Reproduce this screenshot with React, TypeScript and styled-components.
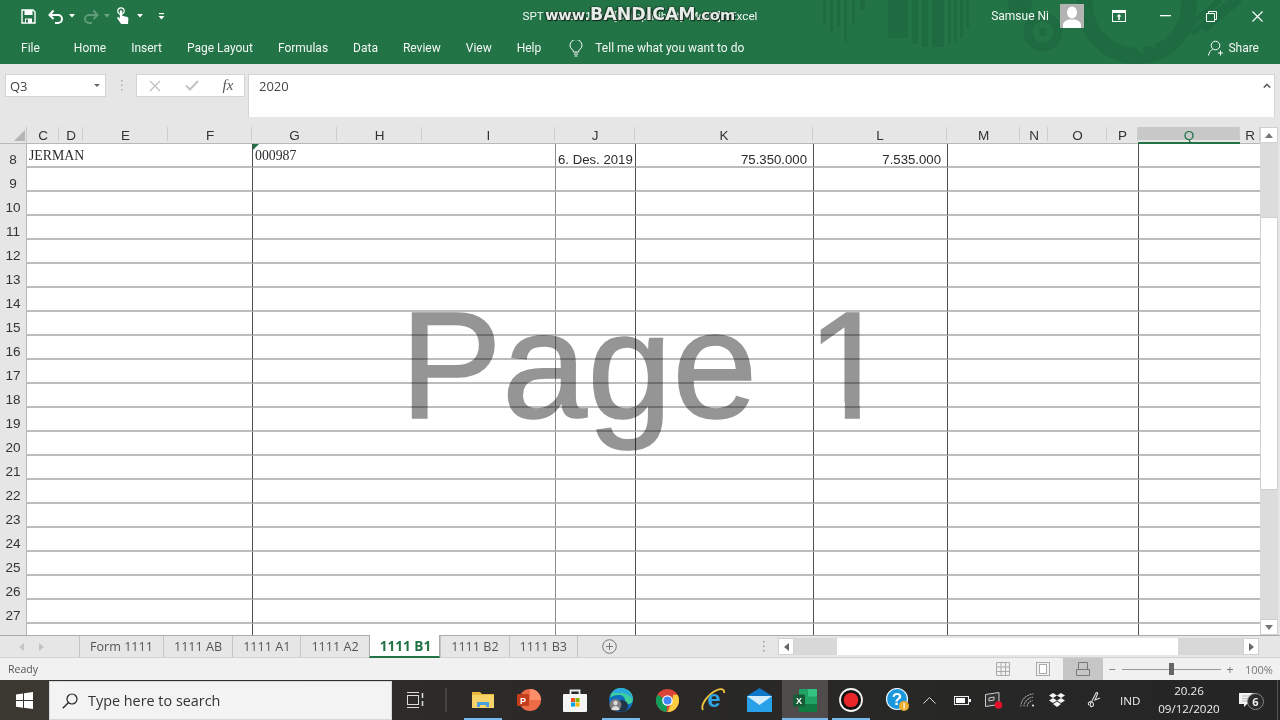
import { Fragment } from "react";
import styled, { createGlobalStyle } from "styled-components";

const GlobalStyle = createGlobalStyle`
  html, body {
    margin: 0;
    padding: 0;
    overflow: hidden;
    background: #e6e6e6;
    font-family: "Open Sans", "Noto Sans", sans-serif;
  }
  * { box-sizing: border-box; }
`;

const Window = styled.div`
  width: 1280px;
  height: 720px;
  display: flex;
  flex-direction: column;
  overflow: hidden;
`;

/* ---------- title bar ---------- */

const TitleBar = styled.header`
  position: relative;
  height: 64px;
  flex: none;
  background: #227447;
  color: #f4f8f5;
  font-family: Roboto, "Open Sans", sans-serif;
  font-size: 12px;
`;

const TitleArt = styled.svg`
  position: absolute;
  left: 800px;
  top: 0;
`;

const TitleRow = styled.div`
  position: relative;
  height: 32px;
  display: grid;
  grid-template-columns: 1fr auto 1fr;
  align-items: center;
`;

const QuickAccess = styled.div`
  display: flex;
  align-items: center;
  height: 32px;
  padding-left: 20px;
`;

const QuickButton = styled.span<{ $w: number; $ml?: number; $dim?: boolean }>`
  width: ${(p) => p.$w}px;
  margin-left: ${(p) => p.$ml ?? 0}px;
  height: 20px;
  display: flex;
  align-items: center;
  justify-content: center;
  opacity: ${(p) => (p.$dim ? 0.35 : 1)};
`;

const DocTitle = styled.div`
  font-size: 11.7px;
  white-space: nowrap;
`;

const Watermark = styled.div`
  position: absolute;
  left: 530px;
  top: 3px;
  width: 220px;
  text-align: center;
  white-space: nowrap;
  font-family: "DejaVu Sans", sans-serif;
  font-weight: 700;
  font-size: 14.6px;
  line-height: 22px;
  color: #e6ece8;
  text-shadow: 0 0 2px #14291c, 1px 1px 1px #14291c, -1px 0 1px #14291c;
  b {
    font-size: 17.4px;
  }
`;

const WindowSide = styled.div`
  display: flex;
  align-items: center;
  justify-content: flex-end;
  height: 32px;
`;

const UserName = styled.span`
  margin-right: 11px;
`;

const Avatar = styled.span`
  width: 24px;
  height: 24px;
  margin-right: 12px;
  background: #b3b3b3;
  display: flex;
`;

const WindowButton = styled.span`
  width: 46px;
  height: 32px;
  display: flex;
  align-items: center;
  justify-content: center;
`;

const RibbonRow = styled.nav`
  position: relative;
  height: 32px;
  display: flex;
  align-items: center;
  padding-left: 21px;
`;

const RibbonTab = styled.span<{ $first?: boolean }>`
  margin-right: ${(p) => (p.$first ? 34 : 25)}px;
  white-space: nowrap;
`;

const TellMe = styled.span`
  display: flex;
  align-items: center;
  gap: 12px;
  margin-left: 3px;
`;

const Share = styled.span`
  margin-left: auto;
  margin-right: 21px;
  display: flex;
  align-items: center;
  gap: 5px;
`;

/* ---------- formula bar ---------- */

const FormulaBar = styled.section`
  height: 63px;
  flex: none;
  display: flex;
  align-items: flex-start;
  padding: 10px 5px 0 5px;
  background: #e6e6e6;
`;

const NameBox = styled.div`
  width: 101px;
  height: 23px;
  background: #fff;
  border: 1px solid #d4d4d4;
  display: flex;
  align-items: center;
  justify-content: space-between;
  padding: 0 5px 0 4px;
  font-size: 13px;
  color: #444;
`;

const Caret = styled.span`
  width: 0;
  height: 0;
  border-left: 3px solid transparent;
  border-right: 3px solid transparent;
  border-top: 3px solid #666;
`;

const Grip = styled.div`
  width: 30px;
  height: 23px;
  display: flex;
  align-items: center;
  justify-content: center;
`;

const FunctionBox = styled.div`
  width: 109px;
  height: 23px;
  background: #fff;
  border: 1px solid #d4d4d4;
  display: grid;
  grid-template-columns: 36px 37px 36px;
  align-items: center;
  justify-items: center;
  color: #666;
`;

const FxLabel = styled.span`
  font-family: "Liberation Serif", serif;
  font-style: italic;
  font-size: 15px;
  color: #555;
`;

const FormulaInput = styled.div`
  margin-left: 3px;
  width: 1027px;
  height: 43px;
  background: #fff;
  border: 1px solid #d4d4d4;
  border-bottom: none;
  padding: 2px 10px;
  display: flex;
  justify-content: space-between;
  font-size: 13px;
  line-height: 18px;
  color: #444;
`;

const CollapseButton = styled.span`
  margin: -2px -7px 0 0;
`;

/* ---------- sheet ---------- */

const Sheet = styled.main`
  position: relative;
  height: 508px;
  flex: none;
  display: flex;
  background: #e6e6e6;
`;

const Grid = styled.div`
  width: 1260px;
  height: 508px;
  overflow: hidden;
  display: grid;
  grid-auto-rows: 24px;
  grid-template-rows: 17px;
  background: #fff;
  font-family: "Liberation Sans", sans-serif;
`;

const Corner = styled.div`
  background: #e6e6e6;
  border-bottom: 1px solid #b8b8b8;
  border-right: 1px solid #c6c6c6;
  padding: 3px 0 0 14px;
`;

const CornerMark = styled.div`
  width: 0;
  height: 0;
  border-left: 11px solid transparent;
  border-bottom: 11px solid #b5b5b5;
`;

const ColumnHead = styled.div<{ $selected?: boolean }>`
  background: ${(p) => (p.$selected ? "#c8c8c8" : "#e6e6e6")};
  color: ${(p) => (p.$selected ? "#217346" : "#333")};
  border-bottom: ${(p) => (p.$selected ? "2px solid #217346" : "1px solid #b8b8b8")};
  box-shadow: inset -1px -3px 0 -1px #e6e6e6, inset -1px 0 0 #cdcdcd;
  font-size: 13.5px;
  line-height: 17px;
  text-align: center;
`;

const RowHead = styled.div`
  background: #e6e6e6;
  border-right: 1px solid #b8b8b8;
  color: #333;
  font-size: 13.5px;
  padding-top: 8px;
  text-align: center;
`;

const Cell = styled.div<{ $edge?: string; $right?: boolean; $serif?: boolean }>`
  position: relative;
  border-bottom: 2px solid #bcbcbc;
  border-left: ${(p) => (p.$edge ? `1px solid ${p.$edge}` : "none")};
  color: #2b2b2b;
  white-space: nowrap;
  font-family: ${(p) => (p.$serif ? '"Liberation Serif", serif' : '"Liberation Sans", sans-serif')};
  font-size: ${(p) => (p.$serif ? 13.8 : 13.2)}px;
  text-align: ${(p) => (p.$right ? "right" : "left")};
  padding: ${(p) => (p.$serif ? "4px 2px 0 2px" : "8px 6px 0 2px")};
`;

const ErrorMark = styled.span`
  position: absolute;
  left: 0;
  top: 0;
  width: 0;
  height: 0;
  border-top: 6px solid #217346;
  border-right: 6px solid transparent;
`;

const PageLabel = styled.div`
  position: absolute;
  left: 400px;
  top: 161px;
  font-family: "Liberation Sans", sans-serif;
  font-size: 153px;
  line-height: 153px;
  color: #959595;
  -webkit-text-stroke: 1.5px #959595;
  mix-blend-mode: multiply;
  white-space: pre;
`;

/* Liberation's 1 has a foot that the reference's font lacks, so it is cut away */
const PageDigit = styled.span`
  display: inline-block;
  margin-left: 7px;
  clip-path: polygon(0 0, 90px 0, 90px 114px, 53px 114px, 53px 145px, 38px 145px, 38px 114px, 0 114px);
`;

const ScrollBar = styled.div`
  width: 20px;
  display: flex;
  flex-direction: column;
  align-items: center;
  padding-right: 2px;
`;

const ScrollArrow = styled.span`
  width: 18px;
  height: 16px;
  flex: none;
  background: #fff;
  border: 1px solid #d0d0d0;
  display: flex;
  align-items: center;
  justify-content: center;
`;

const ScrollTrack = styled.div<{ $grow: number }>`
  width: 18px;
  flex: ${(p) => p.$grow} 0 0;
  background: #dcdcdc;
`;

const ScrollThumb = styled.div`
  width: 18px;
  height: 273px;
  flex: none;
  background: #fff;
  border: 1px solid #d0d0d0;
`;

/* ---------- sheet tabs ---------- */

const TabBar = styled.div`
  height: 23px;
  flex: none;
  display: flex;
  align-items: stretch;
  background: #e6e6e6;
  border-top: 1px solid #ababab;
  border-bottom: 1px solid #d2d2d2;
  padding-left: 16px;
  color: #555;
`;

const TabNav = styled.div`
  width: 63px;
  display: flex;
  align-items: center;
  gap: 15px;
  padding-left: 3px;
`;

const Tab = styled.div<{ $active?: boolean }>`
  position: relative;
  margin-top: ${(p) => (p.$active ? -1 : 0)}px;
  padding: ${(p) => (p.$active ? "0 8px 0 10px" : "0 10px")};
  height: ${(p) => (p.$active ? 23 : 21)}px;
  font-size: ${(p) => (p.$active ? 13.6 : 12.6)}px;
  line-height: 22px;
  white-space: nowrap;
  background: ${(p) => (p.$active ? "#fff" : "transparent")};
  color: ${(p) => (p.$active ? "#217346" : "#555")};
  font-weight: ${(p) => (p.$active ? 700 : 400)};
  border-left: 1px solid ${(p) => (p.$active ? "#ababab" : "#c4c4c4")};
  border-right: ${(p) => (p.$active ? "1px solid #ababab" : "none")};
  border-bottom: ${(p) => (p.$active ? "2px solid #217346" : "none")};
`;

const TabEnd = styled.span`
  width: 1px;
  height: 21px;
  background: #c4c4c4;
`;

const AddSheet = styled.span`
  margin-left: 24px;
  width: 16px;
  display: flex;
  align-items: center;
`;

const TabSplit = styled.span`
  margin-left: 144px;
  width: 12px;
  display: flex;
  align-items: center;
`;

const HScroll = styled.div`
  margin-left: 4px;
  margin-top: 2px;
  width: 481px;
  height: 17px;
  display: flex;
`;

const HArrow = styled.span`
  width: 16px;
  flex: none;
  background: #fff;
  border: 1px solid #d0d0d0;
  display: flex;
  align-items: center;
  justify-content: center;
`;

const HTrack = styled.div<{ $w: number }>`
  width: ${(p) => p.$w}px;
  flex: none;
  background: ${(p) => (p.$w > 200 ? "#fff" : "#d8d8d8")};
`;

/* ---------- status bar ---------- */

const StatusBar = styled.footer`
  height: 22px;
  flex: none;
  display: flex;
  align-items: center;
  background: #f1f1f1;
  padding-left: 8px;
  font-size: 10.5px;
  color: #555;
`;

const StatusViews = styled.div`
  margin-left: auto;
  display: flex;
  align-items: stretch;
  height: 22px;
`;

const ViewButton = styled.span<{ $active?: boolean }>`
  width: 40px;
  display: flex;
  align-items: center;
  justify-content: center;
  background: ${(p) => (p.$active ? "#c6c6c6" : "transparent")};
`;

const ZoomArea = styled.div`
  width: 177px;
  display: flex;
  align-items: center;
  padding-left: 2px;
  color: #777;
  font-size: 11px;
`;

const ZoomSign = styled.span`
  width: 14px;
  text-align: center;
  font-size: 13px;
`;

const ZoomSlider = styled.div`
  position: relative;
  width: 99px;
  height: 1px;
  margin: 0 2px 0 3px;
  background: #999;
`;

const ZoomThumb = styled.span`
  position: absolute;
  left: 47px;
  top: -6px;
  width: 5px;
  height: 12px;
  background: #666;
`;

const ZoomValue = styled.span`
  margin-left: 8px;
`;

/* ---------- taskbar ---------- */

const Taskbar = styled.div`
  height: 40px;
  flex: none;
  display: flex;
  align-items: stretch;
  background: linear-gradient(90deg, #34322d 0%, #2b2a28 40%, #252525 100%);
  color: #eee;
`;

const StartButton = styled.div`
  width: 49px;
  display: flex;
  align-items: center;
  justify-content: center;
  background: #3b3831;
`;

const SearchBox = styled.div`
  width: 343px;
  margin-top: 1px;
  background: #f3f3f3;
  color: #333;
  display: flex;
  align-items: center;
  gap: 10px;
  padding-left: 12px;
  font-size: 14.4px;
  border: 1px solid #d8d8d8;
`;

const TaskSlot = styled.div<{ $open?: boolean; $active?: boolean }>`
  position: relative;
  width: 46px;
  display: flex;
  align-items: center;
  justify-content: center;
  background: ${(p) => (p.$active ? "#4f4c4b" : "transparent")};
  &::after {
    content: "";
    display: ${(p) => (p.$open ? "block" : "none")};
    position: absolute;
    left: ${(p) => (p.$active ? 0 : 4)}px;
    right: ${(p) => (p.$active ? 0 : 4)}px;
    bottom: 0;
    height: 2px;
    background: #76b9ed;
  }
`;

const TaskGap = styled.div`
  width: 22px;
  display: flex;
  align-items: center;
  padding-left: 7px;
`;

const TaskSeparator = styled.span`
  width: 2px;
  height: 24px;
  background: #45433f;
`;

const TrayIcon = styled.span<{ $ml: number }>`
  width: 18px;
  margin-left: ${(p) => p.$ml}px;
  display: flex;
  align-items: center;
  justify-content: center;
`;

const TrayText = styled.span`
  margin-left: 17px;
  width: 24px;
  align-self: center;
  font-size: 11.6px;
  white-space: nowrap;
`;

const Clock = styled.div`
  margin-left: 13px;
  width: 64px;
  align-self: center;
  text-align: center;
  font-size: 11.6px;
  line-height: 18px;
  white-space: nowrap;
`;

const Notice = styled.span`
  position: relative;
  margin-left: 18px;
  width: 20px;
  display: flex;
  align-items: center;
`;

const NoticeCount = styled.span`
  position: absolute;
  left: 8px;
  top: 13px;
  width: 17px;
  height: 17px;
  border-radius: 50%;
  border: 1px solid #888;
  background: #2a2a2a;
  text-align: center;
  font-size: 11px;
  font-weight: 700;
  line-height: 15px;
`;

const DesktopEdge = styled.span`
  margin-left: 18px;
  width: 1px;
  background: #555;
`;

/* ---------- icons ---------- */

const SaveIcon = () => (
  <svg width="15" height="15" viewBox="0 0 15 15">
    <path d="M1 1h11l2 2v11H1z" fill="none" stroke="#fff" strokeWidth="1.4" />
    <rect x="3.500" y="1" width="8" height="5" fill="#fff" />
    <rect x="4" y="9.500" width="7" height="4.500" fill="#fff" />
    <rect x="5" y="10.500" width="2" height="3" fill="#227447" />
  </svg>
);

const UndoIcon = () => (
  <svg width="16" height="15" viewBox="0 0 16 15">
    <path d="M2 6h8a4 4 0 0 1 0 8H7M5.500 1.500 1.500 6l4 4" fill="none" stroke="#fff" strokeWidth="2" />
  </svg>
);

const RedoIcon = () => (
  <svg width="16" height="15" viewBox="0 0 16 15">
    <path d="M14 6H6a4 4 0 0 0 0 8h3M10.500 1.500l4 4.500-4 4" fill="none" stroke="#cfe3d7" strokeWidth="2" />
  </svg>
);

const TouchIcon = () => (
  <svg width="14" height="18" viewBox="0 0 14 18">
    <circle cx="5" cy="4" r="3.200" fill="none" stroke="#fff" strokeWidth="1.200" />
    <path d="M3.800 4.500a1.200 1.200 0 0 1 2.400 0v4.200l5 1.300c1 .4 1.300 1 1.200 2L12 17H5.200L1.300 11.600c-.5-1 .6-2 1.500-1.200l1 1z" fill="#fff" />
  </svg>
);

const TinyDown = ({ color = "#fff" }: { color?: string }) => (
  <svg width="6" height="4" viewBox="0 0 6 4">
    <path d="M0 0h6L3 3.500z" fill={color} />
  </svg>
);

const CustomizeIcon = () => (
  <svg width="7" height="7" viewBox="0 0 7 7">
    <rect x="1" y="0" width="5" height="1.200" fill="#fff" />
    <path d="M.5 3h6L3.500 6.500z" fill="#fff" />
  </svg>
);

const UserGlyph = () => (
  <svg width="24" height="24" viewBox="0 0 24 24">
    <ellipse cx="12" cy="8.500" rx="5" ry="6" fill="#fff" />
    <path d="M3 24v-3c0-3.500 4-5 6.500-5.500h5C17 16 21 17.500 21 21v3z" fill="#fff" />
  </svg>
);

const RibbonDisplayIcon = () => (
  <svg width="14" height="12" viewBox="0 0 14 12">
    <rect x=".5" y=".5" width="13" height="11" fill="none" stroke="#fff" />
    <rect x="1" y="1" width="12" height="2" fill="#fff" />
    <path d="M7 4 4.500 6.500h1.700V10h1.600V6.500h1.700z" fill="#fff" />
  </svg>
);

const MinimizeIcon = () => (
  <svg width="11" height="2" viewBox="0 0 11 2">
    <rect width="11" height="1.300" fill="#fff" />
  </svg>
);

const RestoreIcon = () => (
  <svg width="11" height="11" viewBox="0 0 11 11">
    <path d="M2.500 2.500V.5h8v8h-2M.5 2.500h8v8h-8z" fill="none" stroke="#fff" />
  </svg>
);

const CloseIcon = () => (
  <svg width="11" height="11" viewBox="0 0 11 11">
    <path d="M.5.500l10 10M10.500.5l-10 10" stroke="#fff" strokeWidth="1.100" />
  </svg>
);

const BulbIcon = () => (
  <svg width="14" height="17" viewBox="0 0 14 17">
    <path d="M4.500 12c0-2.500-3.500-3.500-3.500-6.500a6 6 0 0 1 12 0c0 3-3.500 4-3.500 6.500z" fill="none" stroke="#fff" />
    <path d="M5 14h4M5.500 16h3" stroke="#fff" />
  </svg>
);

const ShareIcon = () => (
  <svg width="15" height="16" viewBox="0 0 15 16">
    <circle cx="7.500" cy="5.500" r="4.300" fill="none" stroke="#fff" />
    <path d="M.5 15.500c.6-3.500 2.500-5.500 4-6M10 13h5M12.500 10.500v5" fill="none" stroke="#fff" />
  </svg>
);

const GripDots = ({ color = "#aaa" }: { color?: string }) => (
  <svg width="3" height="11" viewBox="0 0 3 11">
    <rect x="1" y="0" width="1.500" height="1.500" fill={color} />
    <rect x="1" y="4.500" width="1.500" height="1.500" fill={color} />
    <rect x="1" y="9" width="1.500" height="1.500" fill={color} />
  </svg>
);

const CrossMark = () => (
  <svg width="12" height="12" viewBox="0 0 12 12">
    <path d="M1 1l10 10M11 1 1 11" stroke="#c2c2c2" strokeWidth="1.400" />
  </svg>
);

const CheckMark = () => (
  <svg width="14" height="11" viewBox="0 0 14 11">
    <path d="M1 5.500l4 4 8-8.500" fill="none" stroke="#c2c2c2" strokeWidth="2" />
  </svg>
);

const Chevron = () => (
  <svg width="8" height="6" viewBox="0 0 10 7">
    <path d="M1 5.500l4-4 4 4" fill="none" stroke="#666" strokeWidth="2" />
  </svg>
);

const Triangle = ({ dir, color = "#666" }: { dir: "up" | "down" | "left" | "right"; color?: string }) => {
  const paths = { up: "M0 5h8L4 0z", down: "M0 0h8L4 5z", left: "M5 0v8L0 4z", right: "M0 0v8l5-4z" };
  const box = dir === "up" || dir === "down" ? "0 0 8 5" : "0 0 5 8";
  const wide = dir === "up" || dir === "down";
  return (
    <svg width={wide ? 8 : 5} height={wide ? 5 : 8} viewBox={box}>
      <path d={paths[dir]} fill={color} />
    </svg>
  );
};

const AddIcon = () => (
  <svg width="15" height="15" viewBox="0 0 15 15">
    <circle cx="7.500" cy="7.500" r="6.800" fill="none" stroke="#777" />
    <path d="M7.500 4v7M4 7.500h7" stroke="#777" />
  </svg>
);

const NormalViewIcon = () => (
  <svg width="14" height="14" viewBox="0 0 14 14">
    <path d="M.5.500h13v13H.5zM.5 5h13M.5 9.500h13M5 .5v13M9.500.5v13" fill="none" stroke="#aaa" />
  </svg>
);

const LayoutViewIcon = () => (
  <svg width="14" height="14" viewBox="0 0 14 14">
    <rect x=".5" y=".5" width="13" height="13" fill="none" stroke="#aaa" />
    <rect x="3.500" y="2.500" width="7" height="9" fill="#fff" stroke="#aaa" />
  </svg>
);

const BreakViewIcon = () => (
  <svg width="14" height="14" viewBox="0 0 14 14">
    <path d="M.5 7.500h13v6H.5zM2.500 7.500V.5h9v7" fill="none" stroke="#777" />
  </svg>
);

const WindowsLogo = () => (
  <svg width="17" height="17" viewBox="0 0 17 17">
    <path d="M0 2.400 7 1.400v6.700H0zM8 1.300 17 0v8.100H8zM0 9h7v6.700l-7-1zM8 9h9v8l-9-1.200z" fill="#fff" />
  </svg>
);

const SearchGlyph = () => (
  <svg width="16" height="16" viewBox="0 0 16 16">
    <circle cx="10" cy="6" r="5" fill="none" stroke="#222" strokeWidth="1.200" />
    <path d="M6.300 9.700.8 15.200" stroke="#222" strokeWidth="1.300" />
  </svg>
);

const TaskViewIcon = () => (
  <svg width="17" height="16" viewBox="0 0 17 16">
    <path d="M0 .5h12M0 15.500h12" stroke="#ddd" />
    <rect x=".5" y="3.500" width="11" height="9" fill="none" stroke="#ddd" />
    <path d="M15.500 1v5M15.500 9v5" stroke="#ddd" strokeWidth="1.500" />
  </svg>
);

const ExplorerIcon = () => (
  <svg width="22" height="20" viewBox="0 0 22 20">
    <path d="M0 2h8l2 2h12v14H0z" fill="#e8b93e" />
    <rect y="5" width="22" height="13" fill="#f6d469" />
    <path d="M5 17v-5h12v5h-3v-2H8v2z" fill="#4a9fdd" />
  </svg>
);

const PowerPointIcon = () => (
  <svg width="24" height="22" viewBox="0 0 24 22">
    <circle cx="13" cy="11" r="11" fill="#ed6c47" />
    <path d="M13 0a11 11 0 0 1 11 11H13z" fill="#ff8f6b" />
    <rect y="5" width="12" height="12" rx="1" fill="#c43e1c" />
    <text x="6" y="14.500" textAnchor="middle" fontFamily="Liberation Sans" fontWeight="700" fontSize="9" fill="#fff">P</text>
  </svg>
);

const StoreIcon = () => (
  <svg width="24" height="24" viewBox="0 0 24 24">
    <path d="M7.500 6V2.500h9V6" fill="none" stroke="#eee" strokeWidth="1.800" />
    <rect y="6" width="24" height="18" rx="1" fill="#f5f5f5" />
    <rect x="8" y="10" width="4" height="4" fill="#f25022" />
    <rect x="12.500" y="10" width="4" height="4" fill="#7fba00" />
    <rect x="8" y="14.500" width="4" height="4" fill="#00a4ef" />
    <rect x="12.500" y="14.500" width="4" height="4" fill="#ffb900" />
  </svg>
);

const EdgeIcon = () => (
  <svg width="26" height="26" viewBox="0 0 26 26">
    <circle cx="13" cy="13" r="12" fill="#0f6cbd" />
    <path d="M2 11C3 4 8 1 13 1c7 0 12 5 12 11 0 3-2 5-5 5h-7c2 0 4-2 4-4 0-3-3-5-6-5-4 0-7 1-9 3z" fill="#3ecf9e" />
    <path d="M10 6c5-1 11 1 15 7-1-7-6-12-12-12C9 1 6 3 4 6z" fill="#2aa9e0" />
    <circle cx="14" cy="19" r="6" fill="#22344a" />
    <circle cx="7.500" cy="18" r="6" fill="#7d7d7d" />
    <circle cx="7.500" cy="16" r="2.200" fill="#ddd" />
    <path d="M3.500 23c.5-3 2-4 4-4s3.500 1 4 4z" fill="#ddd" />
  </svg>
);

const ChromeIcon = () => (
  <svg width="23" height="23" viewBox="0 0 24 24">
    <circle cx="12" cy="12" r="12" fill="#db4437" />
    <path d="M12 24A12 12 0 0 1 1.600 6L12 12l-1 12z" fill="#0f9d58" />
    <path d="M22.400 6A12 12 0 0 1 12 24l5-12 1-6z" fill="#ffcd40" />
    <circle cx="12" cy="12" r="5.500" fill="#fff" />
    <circle cx="12" cy="12" r="4.200" fill="#4285f4" />
  </svg>
);

const IeIcon = () => (
  <svg width="26" height="26" viewBox="0 0 26 26">
    <path d="M3 23C0 18 8 7 17 3c4-1.500 8-1 7 3" fill="none" stroke="#f2c53d" strokeWidth="1.800" />
    <text x="14" y="20" textAnchor="middle" fontFamily="Liberation Sans" fontWeight="700" fontSize="24" fill="#2fa7e6">e</text>
  </svg>
);

const MailIcon = () => (
  <svg width="25" height="24" viewBox="0 0 25 24">
    <path d="M0 8 12.500 0 25 8v16H0z" fill="#0f78c8" />
    <path d="M0 8h25v16H0z" fill="#29a1e8" />
    <path d="M0 8l12.500 9L25 8H0z" fill="#d6eefc" />
  </svg>
);

const ExcelIcon = () => (
  <svg width="24" height="23" viewBox="0 0 24 23">
    <rect x="6" width="18" height="23" rx="1" fill="#21a366" />
    <rect x="15" width="9" height="7.500" fill="#33c481" />
    <rect x="6" y="15" width="18" height="8" fill="#107c41" />
    <rect y="5.500" width="12" height="12" rx="1" fill="#185c37" />
    <text x="6" y="15" textAnchor="middle" fontFamily="Liberation Sans" fontWeight="700" fontSize="9" fill="#fff">X</text>
  </svg>
);

const RecordIcon = () => (
  <svg width="24" height="24" viewBox="0 0 24 24">
    <circle cx="12" cy="12" r="11" fill="#111" stroke="#f2f2f2" strokeWidth="1.800" />
    <circle cx="12" cy="12" r="7.300" fill="#e8262a" />
  </svg>
);

const HelpIcon = () => (
  <svg width="24" height="24" viewBox="0 0 24 24">
    <circle cx="12" cy="11" r="10.500" fill="#1b97dd" stroke="#e9f5fc" strokeWidth="1.200" />
    <text x="12" y="17" textAnchor="middle" fontFamily="Liberation Sans" fontWeight="700" fontSize="17" fill="#fff">?</text>
    <circle cx="19" cy="18" r="5" fill="#eeae30" />
    <rect x="18.500" y="15" width="1.200" height="6" fill="#fff" />
  </svg>
);

const TrayChevron = () => (
  <svg width="13" height="7" viewBox="0 0 13 7">
    <path d="M.5 6.500l6-6 6 6" fill="none" stroke="#ddd" />
  </svg>
);

const BatteryIcon = () => (
  <svg width="17" height="9" viewBox="0 0 17 9">
    <rect x=".5" y=".5" width="14" height="8" fill="none" stroke="#eee" />
    <rect x="2" y="2" width="9" height="5" fill="#fff" />
    <rect x="15" y="3" width="2" height="3" fill="#eee" />
  </svg>
);

const ScreenRecIcon = () => (
  <svg width="18" height="17" viewBox="0 0 18 17">
    <path d="M.5 2.500 14 .5v12l-13.500 2z" fill="#333" stroke="#ccc" />
    <path d="M4 9V6l5-1v3z" fill="none" stroke="#ccc" />
    <circle cx="13.500" cy="13" r="3.800" fill="#e3102a" />
  </svg>
);

const WifiIcon = () => (
  <svg width="15" height="14" viewBox="0 0 15 14">
    <path d="M.8 13.500C1 7 6 1.500 13.500.8M4 13.500C4 9 8 4.800 13 4.200M7.200 13.500c.2-3 2.500-5.500 5.500-6" fill="none" stroke="#999" strokeWidth="1.100" strokeDasharray="2 .6" />
    <circle cx="13" cy="12.500" r="1.100" fill="#ddd" />
  </svg>
);

const DropboxIcon = () => (
  <svg width="16" height="15" viewBox="0 0 16 15">
    <path d="M4 0l4 2.500L4 5 0 2.500zM12 0l4 2.500L12 5 8 2.500zM4 5l4 2.500L4 10 0 7.500zM12 5l4 2.500-4 2.500-4-2.500zM4 11l4-2.500 4 2.500-4 3z" fill="#f4f4f4" />
  </svg>
);

const PenIcon = () => (
  <svg width="15" height="16" viewBox="0 0 15 16">
    <path d="M2 13c-2-2 1-4 3-3s2 4 0 4.500S2 13 5 9l4-8c1-1 2 0 1.500 1L8 8l5-2" fill="none" stroke="#ddd" strokeWidth="1.100" />
  </svg>
);

const NoticeIcon = () => (
  <svg width="17" height="15" viewBox="0 0 17 15">
    <path d="M0 0h17v11H8l-3 3v-3H0z" fill="#f4f4f4" />
    <path d="M3 3h11M3 5.500h11M3 8h7" stroke="#aaa" strokeWidth=".8" />
  </svg>
);

/* ---------- data ---------- */

type Column = { name: string; width: number; edge?: string };

const DARK = "#4d4d4d";
const MID = "#8c8c8c";

const columns: Column[] = [
  { name: "C", width: 32 },
  { name: "D", width: 24 },
  { name: "E", width: 85 },
  { name: "F", width: 84 },
  { name: "G", width: 85, edge: DARK },
  { name: "H", width: 85 },
  { name: "I", width: 133 },
  { name: "J", width: 80, edge: MID },
  { name: "K", width: 178, edge: DARK },
  { name: "L", width: 134, edge: DARK },
  { name: "M", width: 73, edge: DARK },
  { name: "N", width: 28 },
  { name: "O", width: 59 },
  { name: "P", width: 31 },
  { name: "Q", width: 102, edge: DARK },
  { name: "R", width: 20 },
];

const template = "27px " + columns.map((c) => `${c.width}px`).join(" ");
const rowNumbers = Array.from({ length: 21 }, (_, i) => i + 8);
const ribbonTabs = ["Home", "Insert", "Page Layout", "Formulas", "Data", "Review", "View", "Help"];
const sheetTabs = ["Form 1111", "1111 AB", "1111 A1", "1111 A2", "1111 B1", "1111 B2", "1111 B3"];

const firstRow: Record<string, { text: string; serif?: boolean; right?: boolean; mark?: boolean }> = {
  C: { text: "JERMAN", serif: true },
  G: { text: "000987", serif: true, mark: true },
  J: { text: "6. Des. 2019", right: true },
  K: { text: "75.350.000", right: true },
  L: { text: "7.535.000", right: true },
};

export default function App() {
  return (
    <Window>
      <GlobalStyle />
      <TitleBar>
        <TitleArt width="480" height="64" viewBox="0 0 480 64">
          <g fill="#1f6b41">
            <rect x="23" y="0" width="3" height="24" />
            <rect x="30" y="0" width="3" height="32" />
            <rect x="37" y="0" width="3" height="26" />
            <rect x="44" y="0" width="3" height="42" />
            <rect x="52" y="0" width="3" height="24" />
            <rect x="60" y="0" width="5" height="10" />
            <rect x="88" y="0" width="20" height="38" />
            <rect x="112" y="0" width="6" height="44" />
            <rect x="122" y="0" width="6" height="47" />
            <rect x="132" y="0" width="12" height="47" />
            <rect x="148" y="0" width="3" height="44" />
            <rect x="154" y="0" width="3" height="42" />
            <rect x="160" y="0" width="3" height="38" />
            <rect x="166" y="0" width="3" height="28" />
          </g>
          <circle cx="243" cy="32" r="15" fill="none" stroke="#1f6b41" strokeWidth="9" />
          <circle cx="243" cy="32" r="4" fill="#1f6b41" />
          <circle cx="220" cy="4" r="12" fill="#1f6b41" />
          <circle cx="337" cy="4" r="52" fill="none" stroke="#1f6b41" strokeWidth="16" />
          <path d="M295 0l48 52M310 0l45 48M325 0l40 40" stroke="#227447" strokeWidth="3" />
          <path d="M380 34 420 0M392 34 432 0M404 30 440 0" stroke="#1f6b41" strokeWidth="6" />
        </TitleArt>
        <TitleRow>
          <QuickAccess>
            <QuickButton $w={16}><SaveIcon /></QuickButton>
            <QuickButton $w={24} $ml={8}><UndoIcon /></QuickButton>
            <QuickButton $w={8}><TinyDown /></QuickButton>
            <QuickButton $w={24} $ml={3} $dim><RedoIcon /></QuickButton>
            <QuickButton $w={8} $dim><TinyDown /></QuickButton>
            <QuickButton $w={24}><TouchIcon /></QuickButton>
            <QuickButton $w={10}><TinyDown /></QuickButton>
            <QuickButton $w={32}><CustomizeIcon /></QuickButton>
          </QuickAccess>
          <DocTitle>SPT Masa 1111 - [Compatibility Mode] - Excel</DocTitle>
          <WindowSide>
            <UserName>Samsue Ni</UserName>
            <Avatar><UserGlyph /></Avatar>
            <WindowButton><RibbonDisplayIcon /></WindowButton>
            <WindowButton><MinimizeIcon /></WindowButton>
            <WindowButton><RestoreIcon /></WindowButton>
            <WindowButton><CloseIcon /></WindowButton>
          </WindowSide>
        </TitleRow>
        <Watermark>www.<b>BANDICAM</b>.com</Watermark>
        <RibbonRow>
          <RibbonTab $first>File</RibbonTab>
          {ribbonTabs.map((t) => (
            <RibbonTab key={t}>{t}</RibbonTab>
          ))}
          <TellMe>
            <BulbIcon />
            Tell me what you want to do
          </TellMe>
          <Share>
            <ShareIcon />
            Share
          </Share>
        </RibbonRow>
      </TitleBar>

      <FormulaBar>
        <NameBox>
          Q3
          <Caret />
        </NameBox>
        <Grip><GripDots /></Grip>
        <FunctionBox>
          <CrossMark />
          <CheckMark />
          <FxLabel>fx</FxLabel>
        </FunctionBox>
        <FormulaInput>
          2020
          <CollapseButton><Chevron /></CollapseButton>
        </FormulaInput>
      </FormulaBar>

      <Sheet>
        <Grid style={{ gridTemplateColumns: template }}>
          <Corner><CornerMark /></Corner>
          {columns.map((c) => (
            <ColumnHead key={c.name} $selected={c.name === "Q"}>{c.name}</ColumnHead>
          ))}
          {rowNumbers.map((n) => (
            <Fragment key={n}>
              <RowHead>{n}</RowHead>
              {columns.map((c) => {
                const data = n === 8 ? firstRow[c.name] : undefined;
                return (
                  <Cell key={c.name} $edge={c.edge} $right={data?.right} $serif={data?.serif}>
                    {data?.mark && <ErrorMark />}
                    {data?.text}
                  </Cell>
                );
              })}
            </Fragment>
          ))}
        </Grid>
        <ScrollBar>
          <ScrollArrow><Triangle dir="up" color="#777" /></ScrollArrow>
          <ScrollTrack $grow={74} />
          <ScrollThumb />
          <ScrollTrack $grow={130} />
          <ScrollArrow><Triangle dir="down" color="#777" /></ScrollArrow>
        </ScrollBar>
        <PageLabel>Page <PageDigit>1</PageDigit></PageLabel>
      </Sheet>

      <TabBar>
        <TabNav>
          <Triangle dir="left" color="#c4c4c4" />
          <Triangle dir="right" color="#c4c4c4" />
        </TabNav>
        {sheetTabs.map((t) => (
          <Tab key={t} $active={t === "1111 B1"}>{t}</Tab>
        ))}
        <TabEnd />
        <AddSheet><AddIcon /></AddSheet>
        <TabSplit><GripDots color="#999" /></TabSplit>
        <HScroll>
          <HArrow><Triangle dir="left" /></HArrow>
          <HTrack $w={43} />
          <HTrack $w={341} />
          <HTrack $w={65} />
          <HArrow><Triangle dir="right" /></HArrow>
        </HScroll>
      </TabBar>

      <StatusBar>
        Ready
        <StatusViews>
          <ViewButton><NormalViewIcon /></ViewButton>
          <ViewButton><LayoutViewIcon /></ViewButton>
          <ViewButton $active><BreakViewIcon /></ViewButton>
          <ZoomArea>
            <ZoomSign>−</ZoomSign>
            <ZoomSlider><ZoomThumb /></ZoomSlider>
            <ZoomSign>+</ZoomSign>
            <ZoomValue>100%</ZoomValue>
          </ZoomArea>
        </StatusViews>
      </StatusBar>

      <Taskbar>
        <StartButton><WindowsLogo /></StartButton>
        <SearchBox>
          <SearchGlyph />
          Type here to search
        </SearchBox>
        <TaskSlot><TaskViewIcon /></TaskSlot>
        <TaskGap><TaskSeparator /></TaskGap>
        <TaskSlot $open><ExplorerIcon /></TaskSlot>
        <TaskSlot><PowerPointIcon /></TaskSlot>
        <TaskSlot><StoreIcon /></TaskSlot>
        <TaskSlot $open><EdgeIcon /></TaskSlot>
        <TaskSlot><ChromeIcon /></TaskSlot>
        <TaskSlot><IeIcon /></TaskSlot>
        <TaskSlot><MailIcon /></TaskSlot>
        <TaskSlot $open $active><ExcelIcon /></TaskSlot>
        <TaskSlot $open><RecordIcon /></TaskSlot>
        <TaskSlot><HelpIcon /></TaskSlot>
        <TrayIcon $ml={0}><TrayChevron /></TrayIcon>
        <TrayIcon $ml={15}><BatteryIcon /></TrayIcon>
        <TrayIcon $ml={14}><ScreenRecIcon /></TrayIcon>
        <TrayIcon $ml={15}><WifiIcon /></TrayIcon>
        <TrayIcon $ml={12}><DropboxIcon /></TrayIcon>
        <TrayIcon $ml={19}><PenIcon /></TrayIcon>
        <TrayText>IND</TrayText>
        <Clock>
          20.26
          <br />
          09/12/2020
        </Clock>
        <Notice>
          <NoticeIcon />
          <NoticeCount>6</NoticeCount>
        </Notice>
        <DesktopEdge />
      </Taskbar>
    </Window>
  );
}
